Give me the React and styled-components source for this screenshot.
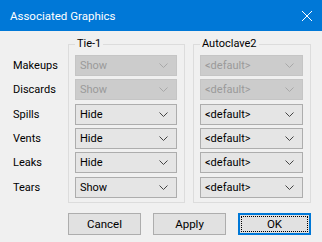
import React from "react";
import styled, { createGlobalStyle } from "styled-components";

const GlobalStyle = createGlobalStyle`
    html, body {
        margin: 0;
        padding: 0;
        background: #f0f0f0;
        overflow: hidden;
    }
    * {
        box-sizing: border-box;
    }
`

const FONT = `Roboto, "Noto Sans", sans-serif`
const ROW_H = 21
const ROW_GAP = 3.35

const Window = styled.div`
    width: 322px;
    height: 242px;
    background: #f0f0f0;
    display: flex;
    flex-direction: column;
    font-family: ${FONT};
    font-size: 11px;
    color: #000;
`

const TitleBar = styled.div`
    height: 31px;
    flex: none;
    background: #0078d7;
    color: #fff;
    display: flex;
    align-items: center;
    justify-content: space-between;
    padding: 0 10px 0 10px;
    font-size: 11.5px;
`

const CloseIcon = styled.svg`
    width: 10px;
    height: 10px;
    display: block;
`

const Body = styled.div`
    display: flex;
    padding-top: 6px;
`

const LabelCol = styled.div`
    width: 68px;
    flex: none;
    display: flex;
    flex-direction: column;
    gap: ${ROW_GAP}px;
    padding: 18px 0 0 13px;
`

const Label = styled.div`
    height: ${ROW_H}px;
    line-height: ${ROW_H}px;
    white-space: nowrap;
`

const Group = styled.fieldset`
    margin: 0 0 0 ${props => props.$gap || 0}px;
    width: ${props => props.$width}px;
    flex: none;
    border: 1px solid #dcdcdc;
    padding: 4px 7px 4px 6px;
    display: flex;
    flex-direction: column;
    gap: ${ROW_GAP}px;
`

const Legend = styled.legend`
    padding: 0 2px;
    height: 14px;
    line-height: 14px;
    font-size: 11px;
`

const Combo = styled.div`
    height: ${ROW_H}px;
    display: flex;
    align-items: center;
    justify-content: space-between;
    padding: 0 8px 0 4px;
    border: 1px solid ${props => props.$disabled ? "#c5c5c5" : "#adadad"};
    background: ${props => props.$disabled ? "#cccccc" : "#e5e5e5"};
    color: ${props => props.$disabled ? "#9a9a9a" : "#000"};
    white-space: nowrap;
`

const Chevron = styled.svg`
    width: 9px;
    height: 5px;
    display: block;
`

const ButtonRow = styled.div`
    display: flex;
    justify-content: flex-end;
    gap: 12px;
    padding: 10px 11px 0 0;
`

const Button = styled.div`
    position: relative;
    width: 73px;
    height: 22px;
    display: flex;
    align-items: center;
    justify-content: center;
    background: #e1e1e1;
    border: 1px solid ${props => props.$default ? "#0078d7" : "#adadad"};
    box-shadow: ${props => props.$default ? "inset 0 0 0 1px #0078d7" : "none"};
    font-size: 11.5px;

    &::after {
        content: "";
        display: ${props => props.$default ? "block" : "none"};
        position: absolute;
        inset: 2px;
        border: 1px dotted #000;
    }
`

const ROWS = [
    { label: "Makeups", tie: "Show", auto: "<default>", disabled: true },
    { label: "Discards", tie: "Show", auto: "<default>", disabled: true },
    { label: "Spills", tie: "Hide", auto: "<default>" },
    { label: "Vents", tie: "Hide", auto: "<default>" },
    { label: "Leaks", tie: "Hide", auto: "<default>" },
    { label: "Tears", tie: "Show", auto: "<default>" },
]

const Dropdown = ({ value, disabled }) => (
    <Combo $disabled={disabled}>
        <span>{value}</span>
        <Chevron viewBox="0 0 9 5">
            <path d="M0.5 0.5 L4.5 4.5 L8.5 0.5" fill="none" stroke={disabled ? "#a8a8a8" : "#444"} strokeWidth="1" />
        </Chevron>
    </Combo>
)

const App = () => {
    return (
        <>
            <GlobalStyle />
            <Window>
                <TitleBar>
                    <span>Associated Graphics</span>
                    <CloseIcon viewBox="0 0 10 10">
                        <path d="M0 0 L10 10 M10 0 L0 10" stroke="#fff" strokeWidth="1" />
                    </CloseIcon>
                </TitleBar>
                <Body>
                    <LabelCol>
                        {ROWS.map(r => <Label key={r.label}>{r.label}</Label>)}
                    </LabelCol>
                    <Group $width={117}>
                        <Legend>Tie-1</Legend>
                        {ROWS.map(r => <Dropdown key={r.label} value={r.tie} disabled={r.disabled} />)}
                    </Group>
                    <Group $width={118} $gap={8}>
                        <Legend>Autoclave2</Legend>
                        {ROWS.map(r => <Dropdown key={r.label} value={r.auto} disabled={r.disabled} />)}
                    </Group>
                </Body>
                <ButtonRow>
                    <Button>Cancel</Button>
                    <Button>Apply</Button>
                    <Button $default>OK</Button>
                </ButtonRow>
            </Window>
        </>
    )
}

export default App
